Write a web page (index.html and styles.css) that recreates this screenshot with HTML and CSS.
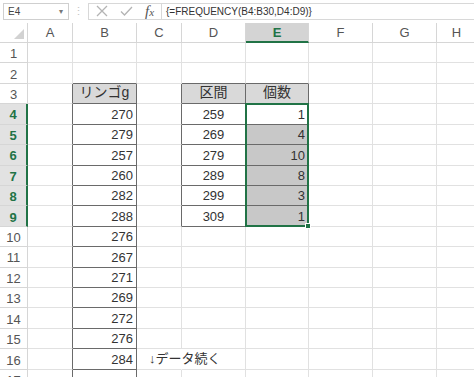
FILE: index.html
```html
<!DOCTYPE html>
<html lang="ja">
<head>
  <meta charset="UTF-8">
  <meta name="viewport" content="width=device-width, initial-scale=1.0">
  <title>FREQUENCY</title>
  <link rel="stylesheet" href="styles.css">
</head>
<body>

<div class="fbar">
  <div class="namebox"><span>E4</span><span class="dd">&#9662;</span></div>
  <span class="grip">&#8942;</span>
  <div class="fbtns">
    <svg class="ico" width="12" height="12" viewBox="0 0 12 12"><path d="M1 1L11 11M11 1L1 11" stroke="#b4b4b4" stroke-width="1.3" fill="none"/></svg>
    <svg class="ico" width="13" height="12" viewBox="0 0 13 12"><path d="M1 6.5L4.5 10L12 2" stroke="#b4b4b4" stroke-width="1.3" fill="none"/></svg>
    <span class="fx">f<span>x</span></span>
  </div>
  <div class="formula">{=FREQUENCY(B4:B30,D4:D9)}</div>
</div>

<div id="sheet"></div>

<script>
  const sheet = document.getElementById('sheet');
  const colNames = ['A', 'B', 'C', 'D', 'E', 'F', 'G', 'H'];
  const rowCount = 17;

  const values = { B3: 'リンゴg', D3: '区間', E3: '個数', C16: '↓データ続く' };
  const headCells = ['B3', 'D3', 'E3'];
  [270, 279, 257, 260, 282, 288, 276, 267, 271, 269, 272, 276, 284].forEach((v, i) => values['B' + (i + 4)] = v);
  [259, 269, 279, 289, 299, 309].forEach((v, i) => values['D' + (i + 4)] = v);
  [1, 4, 10, 8, 3, 1].forEach((v, i) => values['E' + (i + 4)] = v);

  // ranges with dark borders (col index 0 = A)
  const boxes = [
    { c1: 1, c2: 1, r1: 3, r2: 17 },
    { c1: 3, c2: 4, r1: 3, r2: 9 }
  ];
  function inBox(c, r) {
    return boxes.some(b => c >= b.c1 && c <= b.c2 && r >= b.r1 && r <= b.r2);
  }

  function addCell(cls, text) {
    const cell = document.createElement('div');
    cell.className = cls;
    if (text !== undefined) cell.textContent = text;
    sheet.appendChild(cell);
    return cell;
  }

  // column header row
  const corner = addCell('hdr corner');
  corner.appendChild(document.createElement('div')).className = 'tri';
  colNames.forEach(name => addCell('hdr colhdr' + (name === 'E' ? ' active' : ''), name));

  for (let r = 1; r <= rowCount; r++) {
    addCell('hdr rowhdr' + (r >= 4 && r <= 9 ? ' active' : ''), r);
    colNames.forEach((name, c) => {
      const id = name + r;
      const cell = addCell('cell');
      if (inBox(c, r) || inBox(c + 1, r)) cell.classList.add('dark-r');
      if (inBox(c, r) || inBox(c, r + 1)) cell.classList.add('dark-b');
      if (headCells.includes(id)) cell.classList.add('head');
      else if (name === 'D') cell.classList.add('center');
      else if (typeof values[id] === 'number') cell.classList.add('num');
      if (name === 'E' && r >= 5 && r <= 9) cell.classList.add('sel');
      if (id === 'C16') cell.classList.add('spill');
      if (values[id] !== undefined) cell.textContent = values[id];

      // selected range E4:E9 drawn over the active cell
      if (id === 'E4') {
        cell.classList.add('anchor');
        const selection = document.createElement('div');
        selection.className = 'selection';
        selection.appendChild(document.createElement('div')).className = 'handle';
        cell.appendChild(selection);
      }
    });
  }
</script>

</body>
</html>
```

FILE: styles.css
```css
body {
  margin: 0;
  background: #fff;
  font-family: 'Liberation Sans', 'Noto Sans CJK JP', sans-serif;
  color: #333;
  overflow: hidden;
}

/* formula bar */
.fbar {
  display: flex;
  align-items: center;
  height: 22px;
  font-size: 10px;
}
.namebox {
  display: flex;
  justify-content: space-between;
  align-items: center;
  box-sizing: border-box;
  width: 66px;
  height: 17px;
  margin-left: 3px;
  padding: 0 5px 0 4px;
  border: 1px solid #cfcfcf;
  color: #444;
}
.dd {
  font-size: 8px;
  color: #777;
}
.grip {
  width: 19px;
  text-align: center;
  color: #c4c4c4;
  font-size: 11px;
}
.fbtns {
  display: flex;
  align-items: center;
  gap: 12px;
  box-sizing: border-box;
  width: 73px;
  height: 17px;
  padding-left: 7px;
  border: 1px solid #d8d8d8;
  border-right: none;
}
.fx {
  font-family: 'Liberation Serif', serif;
  font-style: italic;
  font-size: 15px;
  color: #555;
  line-height: 1;
}
.fx span {
  font-size: 11px;
}
.formula {
  flex: 1;
  box-sizing: border-box;
  height: 17px;
  padding: 2px 4px;
  border: 1px solid #d8d8d8;
  border-right: none;
  color: #333;
  font-size: 10px;
}

/* sheet */
#sheet {
  display: grid;
  grid-template-columns: 28px 45px 64px 45px 64px 63px 64px 64px 40px;
  grid-template-rows: 20px repeat(17, 20.43px);
  margin-top: 1px;
}
.hdr, .cell {
  box-sizing: border-box;
  border-right: 1px solid #e1e1e1;
  border-bottom: 1px solid #e1e1e1;
  display: flex;
  align-items: flex-end;
  white-space: nowrap;
}
.hdr {
  justify-content: center;
  align-items: center;
  font-size: 13px;
  color: #555;
  border-color: #d6d6d6;
}
.corner {
  justify-content: flex-end;
  align-items: flex-end;
  padding: 0 3px 3px 0;
}
.tri {
  width: 10px;
  height: 10px;
  background: #d2d2d2;
  clip-path: polygon(100% 0, 100% 100%, 0 100%);
}
.colhdr.active {
  background: #d4d4d4;
  border-bottom: 2px solid #217346;
  color: #217346;
  font-weight: bold;
}
.rowhdr {
  padding-top: 2px;
}
.rowhdr.active {
  background: #e2e2e2;
  border-right: 2px solid #217346;
  color: #217346;
  font-weight: bold;
}
.cell {
  font-size: 13px;
  padding: 0 3px 2px;
  color: #333;
}
.dark-r {
  border-right-color: #6a6a6a;
}
.dark-b {
  border-bottom-color: #6a6a6a;
}
.head {
  justify-content: center;
  background: #d9d9d9;
  font-size: 14px;
}
.center {
  justify-content: center;
}
.num {
  justify-content: flex-end;
}
.sel {
  background: #c8c8c8;
}
.spill {
  border-right-color: transparent;
  padding-left: 12px;
  overflow: visible;
}
.anchor {
  position: relative;
}
.selection {
  position: absolute;
  top: -1px;
  left: -1px;
  width: calc(100% + 2px);
  height: calc(600% + 7px);
  box-sizing: border-box;
  border: 2px solid #217346;
  z-index: 2;
  pointer-events: none;
}
.handle {
  position: absolute;
  right: -4px;
  bottom: -4px;
  width: 4px;
  height: 4px;
  background: #217346;
  border: 1px solid #fff;
}
```
